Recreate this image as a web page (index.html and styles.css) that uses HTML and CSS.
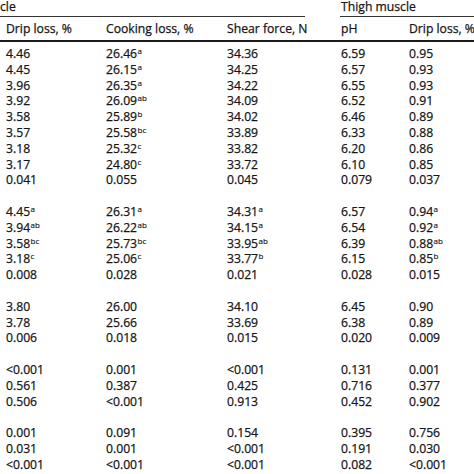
FILE: index.html
```html
<!DOCTYPE html>
<html>
<head>
<meta charset="utf-8">
<link rel="stylesheet" href="styles.css">
</head>
<body>
<div class="table">
  <div class="groups">
    <div class="group breast">cle</div>
    <div class="group thigh">Thigh muscle</div>
  </div>
  <div class="row head">
    <div class="c c1">Drip loss, %</div>
    <div class="c c2">Cooking loss, %</div>
    <div class="c c3">Shear force, N</div>
    <div class="c c4">pH</div>
    <div class="c c5">Drip loss, %</div>
  </div>
  <div class="body">
    <div class="row"><div class="c c1">4.46</div><div class="c c2">26.46<sup>a</sup></div><div class="c c3">34.36</div><div class="c c4">6.59</div><div class="c c5">0.95</div></div>
    <div class="row"><div class="c c1">4.45</div><div class="c c2">26.15<sup>a</sup></div><div class="c c3">34.25</div><div class="c c4">6.57</div><div class="c c5">0.93</div></div>
    <div class="row"><div class="c c1">3.96</div><div class="c c2">26.35<sup>a</sup></div><div class="c c3">34.22</div><div class="c c4">6.55</div><div class="c c5">0.93</div></div>
    <div class="row"><div class="c c1">3.92</div><div class="c c2">26.09<sup>ab</sup></div><div class="c c3">34.09</div><div class="c c4">6.52</div><div class="c c5">0.91</div></div>
    <div class="row"><div class="c c1">3.58</div><div class="c c2">25.89<sup>b</sup></div><div class="c c3">34.02</div><div class="c c4">6.46</div><div class="c c5">0.89</div></div>
    <div class="row"><div class="c c1">3.57</div><div class="c c2">25.58<sup>bc</sup></div><div class="c c3">33.89</div><div class="c c4">6.33</div><div class="c c5">0.88</div></div>
    <div class="row"><div class="c c1">3.18</div><div class="c c2">25.32<sup>c</sup></div><div class="c c3">33.82</div><div class="c c4">6.20</div><div class="c c5">0.86</div></div>
    <div class="row"><div class="c c1">3.17</div><div class="c c2">24.80<sup>c</sup></div><div class="c c3">33.72</div><div class="c c4">6.10</div><div class="c c5">0.85</div></div>
    <div class="row"><div class="c c1">0.041</div><div class="c c2">0.055</div><div class="c c3">0.045</div><div class="c c4">0.079</div><div class="c c5">0.037</div></div>
    <div class="row blank"></div>
    <div class="row"><div class="c c1">4.45<sup>a</sup></div><div class="c c2">26.31<sup>a</sup></div><div class="c c3">34.31<sup>a</sup></div><div class="c c4">6.57</div><div class="c c5">0.94<sup>a</sup></div></div>
    <div class="row"><div class="c c1">3.94<sup>ab</sup></div><div class="c c2">26.22<sup>ab</sup></div><div class="c c3">34.15<sup>a</sup></div><div class="c c4">6.54</div><div class="c c5">0.92<sup>a</sup></div></div>
    <div class="row"><div class="c c1">3.58<sup>bc</sup></div><div class="c c2">25.73<sup>bc</sup></div><div class="c c3">33.95<sup>ab</sup></div><div class="c c4">6.39</div><div class="c c5">0.88<sup>ab</sup></div></div>
    <div class="row"><div class="c c1">3.18<sup>c</sup></div><div class="c c2">25.06<sup>c</sup></div><div class="c c3">33.77<sup>b</sup></div><div class="c c4">6.15</div><div class="c c5">0.85<sup>b</sup></div></div>
    <div class="row"><div class="c c1">0.008</div><div class="c c2">0.028</div><div class="c c3">0.021</div><div class="c c4">0.028</div><div class="c c5">0.015</div></div>
    <div class="row blank"></div>
    <div class="row"><div class="c c1">3.80</div><div class="c c2">26.00</div><div class="c c3">34.10</div><div class="c c4">6.45</div><div class="c c5">0.90</div></div>
    <div class="row"><div class="c c1">3.78</div><div class="c c2">25.66</div><div class="c c3">33.69</div><div class="c c4">6.38</div><div class="c c5">0.89</div></div>
    <div class="row"><div class="c c1">0.006</div><div class="c c2">0.018</div><div class="c c3">0.015</div><div class="c c4">0.020</div><div class="c c5">0.009</div></div>
    <div class="row blank"></div>
    <div class="row"><div class="c c1">&lt;0.001</div><div class="c c2">0.001</div><div class="c c3">&lt;0.001</div><div class="c c4">0.131</div><div class="c c5">0.001</div></div>
    <div class="row"><div class="c c1">0.561</div><div class="c c2">0.387</div><div class="c c3">0.425</div><div class="c c4">0.716</div><div class="c c5">0.377</div></div>
    <div class="row"><div class="c c1">0.506</div><div class="c c2">&lt;0.001</div><div class="c c3">0.913</div><div class="c c4">0.452</div><div class="c c5">0.902</div></div>
    <div class="row blank"></div>
    <div class="row"><div class="c c1">0.001</div><div class="c c2">0.091</div><div class="c c3">0.154</div><div class="c c4">0.395</div><div class="c c5">0.756</div></div>
    <div class="row"><div class="c c1">0.031</div><div class="c c2">0.001</div><div class="c c3">&lt;0.001</div><div class="c c4">0.191</div><div class="c c5">0.030</div></div>
    <div class="row"><div class="c c1">&lt;0.001</div><div class="c c2">&lt;0.001</div><div class="c c3">&lt;0.001</div><div class="c c4">0.082</div><div class="c c5">&lt;0.001</div></div>
  </div>
</div>
</body>
</html>
```
FILE: styles.css
```css
html, body {
  margin: 0;
  padding: 0;
  background: #ffffff;
}
body {
  width: 474px;
  height: 474px;
  overflow: hidden;
  font-family: "Open Sans", "DejaVu Sans", sans-serif;
  font-size: 12.2px;
  color: #161616;
  -webkit-text-stroke: 0.25px #161616;
}
.table {
  display: flex;
  flex-direction: column;
}
.groups {
  display: flex;
  height: 16px;
  align-items: flex-start;
}
.group {
  line-height: 14px;
  height: 17px;
  box-sizing: border-box;
  border-bottom: 1px solid #333;
}
.breast {
  width: 305px;
}
.thigh {
  margin-left: 35px;
  flex: 1;
  padding-left: 1px;
}
.row {
  display: grid;
  grid-template-columns: 106px 121px 114px 68px 65px;
  height: 15.8px;
  line-height: 15.8px;
  white-space: nowrap;
}
.c1 { padding-left: 6px; }
.head {
  height: 26px;
  line-height: 24px;
  box-sizing: border-box;
  border-bottom: 2px solid #1a1a1a;
  padding-top: 1px;
}
.body {
  padding-top: 4px;
}
sup {
  font-size: 8px;
  line-height: 0;
  vertical-align: 4px;
  margin-left: 0.5px;
  -webkit-text-stroke: 0.15px #161616;
}
```
